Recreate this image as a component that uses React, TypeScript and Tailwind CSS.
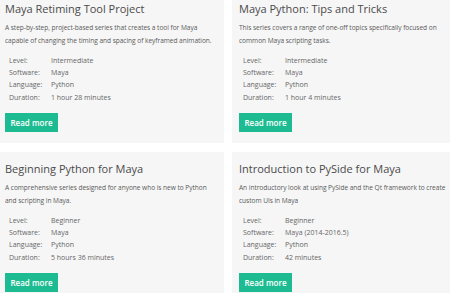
const courses = [
  {
    title: "Maya Retiming Tool Project",
    text: "A step-by-step, project-based series that creates a tool for Maya capable of changing the timing and spacing of keyframed animation.",
    level: "Intermediate",
    software: "Maya",
    language: "Python",
    duration: "1 hour 28 minutes",
  },
  {
    title: "Maya Python: Tips and Tricks",
    text: "This series covers a range of one-off topics specifically focused on common Maya scripting tasks.",
    level: "Intermediate",
    software: "Maya",
    language: "Python",
    duration: "1 hour 4 minutes",
  },
  {
    title: "Beginning Python for Maya",
    text: "A comprehensive series designed for anyone who is new to Python and scripting in Maya.",
    level: "Beginner",
    software: "Maya",
    language: "Python",
    duration: "5 hours 36 minutes",
  },
  {
    title: "Introduction to PySide for Maya",
    text: "An introductory look at using PySide and the Qt framework to create custom UIs in Maya",
    level: "Beginner",
    software: "Maya (2014-2016.5)",
    language: "Python",
    duration: "42 minutes",
  },
];

type Course = (typeof courses)[number];

const Row = ({ label, value }: { label: string; value: string }) => (
  <div className="flex h-[12.3px] items-center">
    <span className="w-[42px] shrink-0">{label}</span>
    <span>{value}</span>
  </div>
);

const CourseCard = ({ course }: { course: Course }) => (
  <div className="bg-[#f6f6f6] px-[7px] pt-[11px] h-[151px] flex flex-col">
    <h2 className="text-[11px] leading-[12px] text-[#4a4a4a] whitespace-nowrap">{course.title}</h2>
    <p className="mt-[6px] h-[26px] text-[6.6px] leading-[13px] tracking-[-0.05px] text-[#5a5a5a]">
      {course.text}
    </p>
    <div className="mt-[8px] pl-[4px] text-[7px] text-[#666]">
      <Row label="Level:" value={course.level} />
      <Row label="Software:" value={course.software} />
      <Row label="Language:" value={course.language} />
      <Row label="Duration:" value={course.duration} />
    </div>
    <button className="mt-[9px] h-[19px] w-[53px] bg-[#1dbb92] text-white text-[8px] leading-[19px] font-semibold">
      Read more
    </button>
  </div>
);

export default function App() {
  return (
    <div
      className="w-[450px] h-[293px] overflow-hidden bg-white"
      style={{ fontFamily: '"Open Sans", "Liberation Sans", sans-serif' }}
    >
      <div className="-mt-[8px] -ml-[2px] grid grid-cols-[226px_226px] gap-x-[8px] gap-y-[9px]">
        {courses.map((c) => (
          <CourseCard key={c.title} course={c} />
        ))}
      </div>
    </div>
  );
}
